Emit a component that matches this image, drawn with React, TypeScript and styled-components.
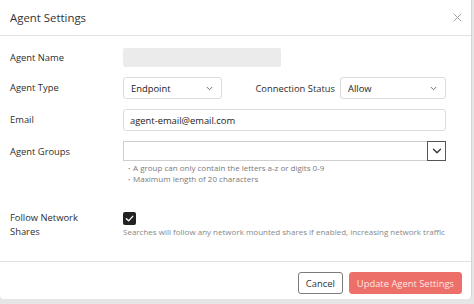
import styled, { createGlobalStyle } from "styled-components";

const GlobalStyle = createGlobalStyle`
  html, body {
    margin: 0;
    padding: 0;
    background: #e6e6e6;
  }
  body {
    font-family: "Open Sans", "Liberation Sans", sans-serif;
    color: #333;
  }
`;

const Chevron = ({ color = "#666", size = 7 }: { color?: string; size?: number }) => (
  <svg width={size} height={size} viewBox="0 0 10 10" fill="none">
    <path d="M1.5 3.2 L5 6.8 L8.5 3.2" stroke={color} strokeWidth="1.3" strokeLinecap="round" strokeLinejoin="round" />
  </svg>
);

export default function App() {
  return (
    <>
      <GlobalStyle />
      <Dialog>
        <Header>
          <Title>Agent Settings</Title>
          <Close>
            <svg width="9" height="9" viewBox="0 0 10 10" fill="none">
              <path d="M1 1 L9 9 M9 1 L1 9" stroke="#9a9a9a" strokeWidth="1" strokeLinecap="round" />
            </svg>
          </Close>
        </Header>
        <Body>
          <Row $top={12}>
            <Label>Agent Name</Label>
            <DisabledInput />
          </Row>
          <Row $top={10}>
            <Label>Agent Type</Label>
            <Select $width={99}>
              <span>Endpoint</span>
              <Chevron />
            </Select>
            <InlineLabel>Connection Status</InlineLabel>
            <Select $width={106}>
              <span>Allow</span>
              <Chevron />
            </Select>
          </Row>
          <Row $top={10}>
            <Label>Email</Label>
            <TextBox>agent-email@email.com</TextBox>
          </Row>
          <Row $top={10} $align="flex-start">
            <Label $pad={4}>Agent Groups</Label>
            <Field>
              <Combo>
                <ComboInput />
                <ComboButton>
                  <Chevron color="#333" size={10} />
                </ComboButton>
              </Combo>
              <Hints>
                <li>A group can only contain the letters a-z or digits 0-9</li>
                <li>Maximum length of 20 characters</li>
              </Hints>
            </Field>
          </Row>
          <Row $top={27} $align="flex-start">
            <Label $pad={0}>
              Follow Network
              <br />
              Shares
            </Label>
            <Field>
              <Checkbox>
                <svg width="9" height="9" viewBox="0 0 10 10" fill="none">
                  <path d="M1.5 5.2 L4 7.6 L8.6 2.6" stroke="#fff" strokeWidth="1.5" strokeLinecap="round" strokeLinejoin="round" />
                </svg>
              </Checkbox>
              <Description>
                Searches will follow any network mounted shares if enabled, increasing network traffic
              </Description>
            </Field>
          </Row>
        </Body>
        <Footer>
          <Button>Cancel</Button>
          <Button $primary>Update Agent Settings</Button>
        </Footer>
      </Dialog>
    </>
  );
}

const Dialog = styled.div`
  width: 471px;
  height: 299px;
  background: #fff;
  border-right: 1px solid #d4d4d4;
  border-bottom-left-radius: 4px;
  border-bottom-right-radius: 4px;
  display: flex;
  flex-direction: column;
`;

const Header = styled.div`
  height: 36px;
  box-sizing: border-box;
  border-bottom: 1px solid #e2e2e2;
  display: flex;
  align-items: center;
  justify-content: space-between;
  padding: 0 9px 0 10px;
`;

const Title = styled.h1`
  margin: 0;
  font-size: 11.4px;
  font-weight: 400;
  color: #333;
`;

const Close = styled.span`
  display: flex;
  align-items: center;
`;

const Body = styled.div`
  flex: 1;
  padding: 0 25px 0 10px;
`;

const Row = styled.div<{ $top: number; $align?: string }>`
  display: flex;
  align-items: ${(p) => p.$align || "center"};
  margin-top: ${(p) => p.$top}px;
`;

const Label = styled.div<{ $pad?: number }>`
  width: 113px;
  flex-shrink: 0;
  font-size: 9.4px;
  line-height: 14px;
  color: #2e2e2e;
  padding-top: ${(p) => p.$pad ?? 0}px;
`;

const InlineLabel = styled.div`
  font-size: 9.4px;
  color: #2e2e2e;
  margin: 0 5px 0 auto;
`;

const DisabledInput = styled.div`
  width: 158px;
  height: 19px;
  background: #ebebeb;
  border-radius: 2px;
`;

const Select = styled.div<{ $width: number }>`
  width: ${(p) => p.$width}px;
  height: 22px;
  box-sizing: border-box;
  border: 1px solid #dcdcdc;
  border-radius: 3px;
  display: flex;
  align-items: center;
  justify-content: space-between;
  padding: 0 8px 0 7px;
  font-size: 9.4px;
  color: #222;
`;

const TextBox = styled.div`
  flex: 1;
  height: 22px;
  box-sizing: border-box;
  border: 1px solid #dcdcdc;
  border-radius: 3px;
  display: flex;
  align-items: center;
  padding: 0 6px;
  font-size: 9.4px;
  color: #222;
`;

const Field = styled.div`
  flex: 1;
  display: flex;
  flex-direction: column;
`;

const Combo = styled.div`
  display: flex;
  height: 20px;
`;

const ComboInput = styled.div`
  flex: 1;
  box-sizing: border-box;
  border: 1px solid #cfcfcf;
  border-right: none;
`;

const ComboButton = styled.div`
  width: 19px;
  box-sizing: border-box;
  border: 1px solid #555;
  display: flex;
  align-items: center;
  justify-content: center;
`;

const Hints = styled.ul`
  margin: 1px 0 0;
  padding-left: 10px;
  font-size: 8px;
  line-height: 11px;
  color: #7a7a7a;
  list-style: none;

  li::before {
    content: "•";
    display: inline-block;
    width: 5px;
    margin-left: -5px;
    font-size: 6px;
    line-height: 1;
    color: #888;
  }
`;

const Checkbox = styled.div`
  width: 13px;
  height: 13px;
  margin-top: 1px;
  border-radius: 2px;
  background: #222;
  display: flex;
  align-items: center;
  justify-content: center;
`;

const Description = styled.div`
  margin-top: 1px;
  font-size: 8px;
  line-height: 12px;
  color: #888;
  white-space: nowrap;
`;

const Footer = styled.div`
  height: 38px;
  box-sizing: border-box;
  border-top: 1px solid #e2e2e2;
  display: flex;
  align-items: flex-start;
  justify-content: flex-end;
  gap: 6px;
  padding: 10px 9px 0;
`;

const Button = styled.button<{ $primary?: boolean }>`
  height: 22px;
  box-sizing: border-box;
  border-radius: 3px;
  font-family: "Open Sans", "Liberation Sans", sans-serif;
  font-size: 9.4px;
  padding: 0 7px;
  border: 1px solid ${(p) => (p.$primary ? "#ec6f69" : "#7b7b7b")};
  background: ${(p) => (p.$primary ? "#ec6f69" : "#fff")};
  color: ${(p) => (p.$primary ? "#fde6e4" : "#333")};
`;
